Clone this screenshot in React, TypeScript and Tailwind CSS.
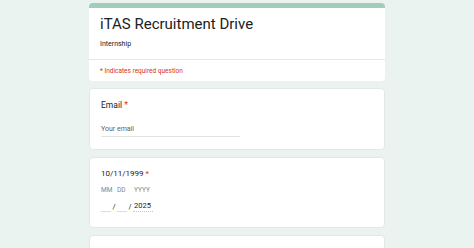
import * as React from "react";

const font = { fontFamily: "Roboto, 'Noto Sans', sans-serif" };

const Card = ({ children, className }: { children: React.ReactNode; className?: string }) => (
    <div className={"shrink-0 bg-white rounded-[4px] border border-[#e3e8e6] " + (className || "")}>{children}</div>
);

export default function App() {
    return (
        <div className="w-[474px] h-[248px] overflow-hidden bg-[#ebf3f0] flex items-start justify-center pt-[3px]" style={font}>
            <div className="w-[296px] flex flex-col gap-[7px]">
                <div className="shrink-0 bg-white rounded-[4px] border-t-[5px] border-[#9fcfba] h-[78px] flex flex-col">
                    <div className="px-[11px] pt-[6px] h-[51px]">
                        <h1 className="text-[15px] leading-[20px] text-[#202124]">iTAS Recruitment Drive</h1>
                        <p className="text-[7px] leading-[10px] text-[#202124] mt-[5px]">Internship</p>
                    </div>
                    <div className="border-t border-[#e6e8e8] px-[11px] pt-[6px]">
                        <p className="text-[6.5px] leading-[10px] text-[#d93025]">* Indicates required question</p>
                    </div>
                </div>

                <Card className="h-[62px] px-[11px] pt-[10px]">
                    <p className="text-[8.5px] leading-[12px] text-[#202124]">
                        Email <span className="text-[#d93025]">*</span>
                    </p>
                    <div className="mt-[13px] w-[139px] border-b border-[#e0e3e2] pb-[2px] text-[7px] leading-[10px] text-[#5f6368]">
                        Your email
                    </div>
                </Card>

                <Card className="h-[71px] px-[11px] pt-[10px]">
                    <p className="text-[8px] leading-[12px] text-[#202124]">
                        10/11/1999 <span className="text-[#d93025]">*</span>
                    </p>
                    <div className="flex mt-[5px] text-[6.5px] leading-[10px] text-[#80868b]">
                        <span className="w-[16px]">MM</span>
                        <span className="w-[17px]">DD</span>
                        <span>YYYY</span>
                    </div>
                    <div className="flex items-end mt-[6px] text-[7.5px] leading-[10px] text-[#202124]">
                        <span className="w-[10px] h-[10px] border-b border-[#dadce0]"></span>
                        <span className="w-[6px] text-center">/</span>
                        <span className="w-[10px] h-[10px] border-b border-[#dadce0]"></span>
                        <span className="w-[6px] text-center">/</span>
                        <span className="border-b border-dotted border-[#c4c7c5] pl-[1px] pr-[2px]">2025</span>
                    </div>
                </Card>

                <Card className="h-[60px]">
                    <div />
                </Card>
            </div>
        </div>
    );
}
